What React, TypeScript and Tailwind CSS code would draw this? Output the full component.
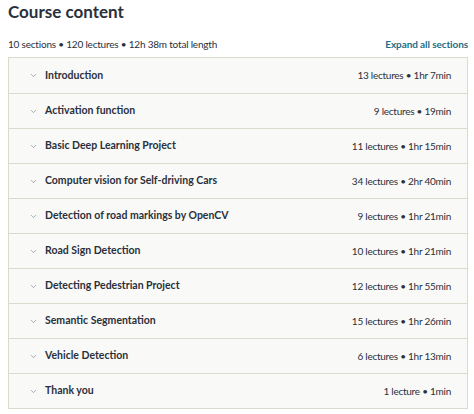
import { ChevronDown } from "lucide-react";

const sections = [
  { title: "Introduction", meta: "13 lectures • 1hr 7min" },
  { title: "Activation function", meta: "9 lectures • 19min" },
  { title: "Basic Deep Learning Project", meta: "11 lectures • 1hr 15min" },
  { title: "Computer vision for Self-driving Cars", meta: "34 lectures • 2hr 40min" },
  { title: "Detection of road markings by OpenCV", meta: "9 lectures • 1hr 21min" },
  { title: "Road Sign Detection", meta: "10 lectures • 1hr 21min" },
  { title: "Detecting Pedestrian Project", meta: "12 lectures • 1hr 55min" },
  { title: "Semantic Segmentation", meta: "15 lectures • 1hr 26min" },
  { title: "Vehicle Detection", meta: "6 lectures • 1hr 13min" },
  { title: "Thank you", meta: "1 lecture • 1min" },
];

export default function App() {
  return (
    <div className="w-[474px] h-[414px] bg-white pl-2 pr-[6px] pt-[1px] font-['Lato',sans-serif] text-[#29303b]">
      <h2 className="text-[17px] font-bold leading-[22px]">Course content</h2>
      <div className="mt-[14px] flex items-center justify-between text-[10px] leading-[14px]">
        <span className="tracking-[-0.2px]">10 sections • 120 lectures • 12h 38m total length</span>
        <span className="font-bold tracking-[-0.1px] text-[#1d6e87]">Expand all sections</span>
      </div>
      <div className="mt-[6px] border border-[#dcdacb]">
        {sections.map((s, i) => (
          <div
            key={s.title}
            className={`flex h-[35px] items-center bg-[#f9f9f8] pl-[20px] pr-[16px] ${i > 0 ? "border-t border-[#dcdacb]" : ""}`}
          >
            <ChevronDown className="h-[9px] w-[9px] text-[#8a9099]" strokeWidth={2} />
            <span className="ml-[7px] text-[10.5px] font-bold">{s.title}</span>
            <span className="ml-auto text-[10px] tracking-[-0.25px]">{s.meta}</span>
          </div>
        ))}
      </div>
    </div>
  );
}
